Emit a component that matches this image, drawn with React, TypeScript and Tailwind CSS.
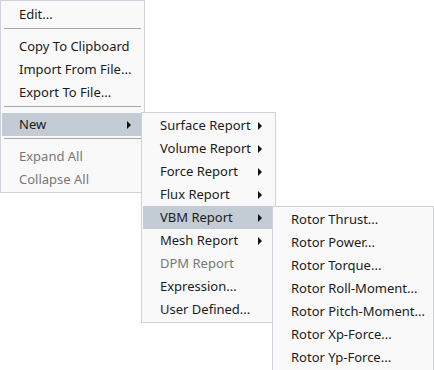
import React from 'react';

type Item =
  | { kind: 'item'; label: string; sub?: boolean; active?: boolean; disabled?: boolean }
  | { kind: 'sep' };

const mainMenu: Item[] = [
  { kind: 'item', label: 'Edit...' },
  { kind: 'sep' },
  { kind: 'item', label: 'Copy To Clipboard' },
  { kind: 'item', label: 'Import From File...' },
  { kind: 'item', label: 'Export To File...' },
  { kind: 'sep' },
  { kind: 'item', label: 'New', sub: true, active: true },
  { kind: 'sep' },
  { kind: 'item', label: 'Expand All', disabled: true },
  { kind: 'item', label: 'Collapse All', disabled: true },
];

const newMenu: Item[] = [
  { kind: 'item', label: 'Surface Report', sub: true },
  { kind: 'item', label: 'Volume Report', sub: true },
  { kind: 'item', label: 'Force Report', sub: true },
  { kind: 'item', label: 'Flux Report', sub: true },
  { kind: 'item', label: 'VBM Report', sub: true, active: true },
  { kind: 'item', label: 'Mesh Report', sub: true },
  { kind: 'item', label: 'DPM Report', disabled: true },
  { kind: 'item', label: 'Expression...' },
  { kind: 'item', label: 'User Defined...' },
];

const vbmMenu: Item[] = [
  { kind: 'item', label: 'Rotor Thrust...' },
  { kind: 'item', label: 'Rotor Power...' },
  { kind: 'item', label: 'Rotor Torque...' },
  { kind: 'item', label: 'Rotor Roll-Moment...' },
  { kind: 'item', label: 'Rotor Pitch-Moment...' },
  { kind: 'item', label: 'Rotor Xp-Force...' },
  { kind: 'item', label: 'Rotor Yp-Force...' },
];

const Arrow = () => (
  <svg width="4" height="8" viewBox="0 0 4 8" className="ml-auto">
    <path d="M0 0 L4 4 L0 8 Z" fill="#111" />
  </svg>
);

const Menu: React.FC<{ items: Item[]; className: string }> = ({ items, className }) => (
  <div
    className={`absolute flex flex-col border border-[#cfd2da] bg-[#f9f9f9] px-px py-px ${className}`}
  >
    {items.map((it, i) =>
      it.kind === 'sep' ? (
        <div key={i} className="mx-[2px] mt-[2px] mb-[6px] h-px bg-[#a6a6a6]" />
      ) : (
        <div
          key={i}
          className={`flex h-[23px] items-center pl-[17px] pr-[12px] pt-px whitespace-nowrap ${
            it.active ? 'bg-[#c3cbd4]' : ''
          } ${it.disabled ? 'text-[#777777]' : 'text-[#1b1b1b]'}`}
        >
          <span>{it.label}</span>
          {it.sub && <Arrow />}
        </div>
      )
    )}
  </div>
);

export default function App() {
  return (
    <div
      className="relative h-[370px] w-[434px] overflow-hidden bg-white text-[13px]"
      style={{ fontFamily: '"Noto Sans", "Open Sans", sans-serif' }}
    >
      <Menu items={mainMenu} className="left-0 top-0 w-[145px] pt-[2px]" />
      <Menu items={newMenu} className="left-[141px] top-[112px] w-[135px]" />
      <Menu items={vbmMenu} className="left-[272px] top-[206px] w-[162px]" />
    </div>
  );
}
